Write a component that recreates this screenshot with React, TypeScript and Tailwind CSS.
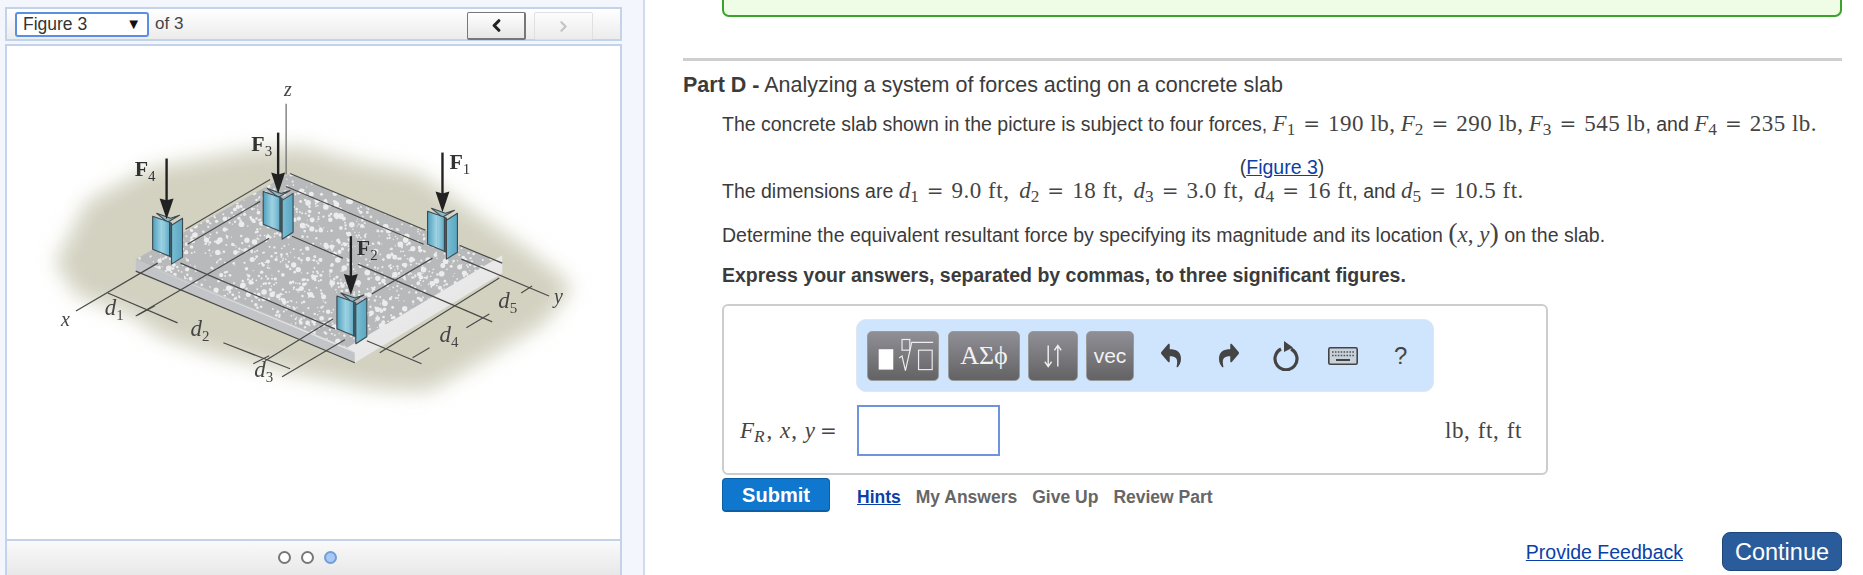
import { ChevronLeft, ChevronRight } from 'lucide-react';
import type { ReactNode } from 'react';
import { FaReply, FaShare } from 'react-icons/fa';

// speckle on the slab surface, seeded so every render gives the same dots
let seed = 17;
const rnd = () => {
  seed = (seed * 16807) % 2147483647;
  return seed / 2147483647;
};
const slabDots = Array.from({ length: 1100 }, () => {
  const u = rnd();
  const v = rnd();
  return {
    x: 290 + u * 213 + v * -155,
    y: 172 + u * 90 + v * 86,
    r: rnd() < 0.2 ? 1.5 + rnd() * 1.4 : 0.6 + rnd() * 0.8,
  };
});

function Column({ x, y }: { x: number; y: number }) {
  return (
    <g transform={`translate(${x} ${y})`} stroke="#3d4a50" strokeWidth="1.1" strokeLinejoin="round">
      <path d="M4 0 L18 5 L27 2 L15 9 Z" fill="#8fb4c2" />
      <path d="M0 3 L17 9 L17 43 L0 36 Z" fill="url(#steelA)" />
      <path d="M10 7 L10 39" stroke="#8ccade" strokeWidth="1" fill="none" />
      <path d="M17 9 L19 10 L19 44 L17 43 Z" fill="#40616e" />
      <path d="M19 12 L30 5 L30 44 L19 51 Z" fill="url(#steelB)" />
    </g>
  );
}

function Arrow({ x, y1, y2 }: { x: number; y1: number; y2: number }) {
  return (
    <g>
      <line x1={x} y1={y1} x2={x} y2={y2 - 10} stroke="#222" strokeWidth="2.4" />
      <path d={`M${x - 7} ${y2 - 21} L${x} ${y2 - 19} L${x + 7} ${y2 - 21} L${x} ${y2} Z`} fill="#222" />
    </g>
  );
}

function Force({ x, y, n }: { x: number; y: number; n: string }) {
  return (
    <text x={x} y={y} fontFamily="'Liberation Serif', serif" fontSize="22" fontWeight="700" fill="#333">
      F
      <tspan dy="5" fontSize="15" fontWeight="400">
        {n}
      </tspan>
    </text>
  );
}

function Dim({ x, y, n }: { x: number; y: number; n: string }) {
  return (
    <text x={x} y={y} fontFamily="'Liberation Serif', serif" fontSize="23" fontStyle="italic" fill="#444">
      d
      <tspan dy="5" fontSize="15" fontStyle="normal">
        {n}
      </tspan>
    </text>
  );
}

function SlabFigure() {
  const lines = [
    'M286 185 L424 243', 'M462 258 L550 295',
    'M270 178 L185 228', 'M260 200 L187 243', 'M157 262 L75 310',
    'M290 172 L426 229', 'M460 244 L503 262',
    'M269 237 L137 314', 'M292 235 L343 257', 'M358 263 L493 321',
    'M433 257 L372 293', 'M333 318 L265 360', 'M345 339 L282 376',
    'M180 262 L335 328', 'M367 340 L422 363',
    'M107 292 L177 322', 'M223 342 L290 368',
    'M135 315 L154 305', 'M253 363 L269 355', 'M413 357 L430 347',
    'M467 327 L490 313', 'M522 292 L533 285',
    'M380 352 L500 277', 'M135 270 L355 362',
  ];
  return (
    <svg viewBox="6 44 615 495" className="block w-full h-full">
      <defs>
        <filter id="soft" x="-20%" y="-20%" width="140%" height="140%">
          <feGaussianBlur stdDeviation="10" />
        </filter>
        <filter id="lens">
          <feGaussianBlur stdDeviation="0.5" />
        </filter>
        <linearGradient id="steelA" x1="0" x2="1" y1="0" y2="0">
          <stop offset="0" stopColor="#4f9fbd" />
          <stop offset="0.55" stopColor="#a2d5e5" />
          <stop offset="1" stopColor="#5fa9c4" />
        </linearGradient>
        <linearGradient id="steelB" x1="0" x2="1" y1="0" y2="0">
          <stop offset="0" stopColor="#79bed3" />
          <stop offset="1" stopColor="#5aa6c2" />
        </linearGradient>
        <clipPath id="slabTop">
          <path d="M290 172 L503 262 L355 350 L135 258 Z" />
        </clipPath>
      </defs>
      <path
        d="M54 262 L86 200 L148 167 L252 148 L303 145 L358 160 L420 172 L460 201 L523 244 L568 279 L572 290 L544 324 L482 361 L429 391 L379 389 L295 373 L210 353 L162 337 L129 314 L75 294 Z"
        fill="#d3d2c1"
        filter="url(#soft)"
      />
      <g filter="url(#lens)">
        <path d="M135 258 L355 350 L355 362 L135 270 Z" fill="#c3c4c7" />
        <path d="M355 350 L503 262 L503 272 L355 362 Z" fill="#e8e8e8" />
        <path d="M290 172 L503 262 L355 350 L135 258 Z" fill="#b8b9bb" />
        <g clipPath="url(#slabTop)">
          {slabDots.map((d, i) => (
            <circle key={i} cx={d.x} cy={d.y} r={d.r} fill="#ececec" />
          ))}
        </g>
        <path d="M355 352 L503 264 L503 254 L347 347 Z" fill="#e9e9e9" />
        <path d="M135 260 L355 352 L347 347 L130 258 Z" fill="#e4e4e4" />
        <line x1="286" y1="102" x2="286" y2="173" stroke="#666" strokeWidth="1.2" />
        {lines.map((d) => (
          <path key={d} d={d} stroke="#4a4a48" strokeWidth="1.2" fill="none" />
        ))}
        <Column x={263} y={187} />
        <Column x={152} y={212} />
        <Column x={428} y={207} />
        <Column x={337} y={292} />
        <Arrow x={278} y1={131} y2={192} />
        <Arrow x={166} y1={157} y2={218} />
        <Arrow x={443} y1={151} y2={211} />
        <Arrow x={351} y1={235} y2={294} />
        <Force x={134} y={175} n="4" />
        <Force x={251} y={149} n="3" />
        <Force x={450} y={168} n="1" />
        <Force x={357} y={254} n="2" />
        <g fontFamily="'Liberation Serif', serif" fontSize="20" fontStyle="italic" fill="#444">
          <text x={284} y={94}>z</text>
          <text x={60} y={325}>x</text>
          <text x={555} y={302}>y</text>
        </g>
        <Dim x={104} y={314} n="1" />
        <Dim x={190} y={335} n="2" />
        <Dim x={254} y={376} n="3" />
        <Dim x={440} y={341} n="4" />
        <Dim x={499} y={307} n="5" />
      </g>
    </svg>
  );
}

function FigurePane() {
  return (
    <aside className="w-[645px] h-[575px] shrink-0 bg-[#f3f7fd] border-r-2 border-[#cfdcf0] pt-[7px] pl-[5px]">
      <div className="w-[617px] h-[34px] flex items-start pl-[8px] pt-[3px] bg-gradient-to-b from-white to-[#ececec] border-2 border-[#c3d3e9]">
        <div className="w-[134px] h-[25px] flex items-center justify-between pl-[6px] pr-[6px] bg-white border-2 border-[#5a90e4] rounded-[3px] text-[17.5px] text-[#333]">
          <span>Figure 3</span>
          <span className="text-[15px] text-[#111]">▼</span>
        </div>
        <span className="ml-[6px] text-[17px] leading-[24px] text-[#444]">of 3</span>
        <button className="ml-[284px] w-[59px] h-[28px] flex items-center justify-center rounded-[2px] bg-gradient-to-b from-white to-[#e6e6e6] border border-b-2 border-r-2 border-[#777]">
          <ChevronLeft size={19} strokeWidth={4} color="#222" />
        </button>
        <button className="ml-[8px] w-[59px] h-[28px] flex items-center justify-center rounded-[2px] border border-[#e0e0e0]">
          <ChevronRight size={17} strokeWidth={3} color="#c4c4c4" />
        </button>
      </div>
      <div className="mt-[3px] w-[617px] h-[531px] flex flex-col bg-white border-x-2 border-t-2 border-[#c3d3e9]">
        <div className="h-[493px]">
          <SlabFigure />
        </div>
        <div className="flex-1 flex items-start justify-center gap-[10px] pt-[10px] pr-[12px] border-t-2 border-[#c3d3e9] bg-gradient-to-b from-[#fafafa] to-[#e8e8e8]">
          <span className="w-[13px] h-[13px] rounded-full bg-white border-2 border-[#777]" />
          <span className="w-[13px] h-[13px] rounded-full bg-white border-2 border-[#777]" />
          <span className="w-[13px] h-[13px] rounded-full bg-[#a9c8f5] border-2 border-[#6f9fd8]" />
        </div>
      </div>
    </aside>
  );
}

function M({ children }: { children: ReactNode }) {
  return <span className="font-['Liberation_Serif',serif] text-[23px] text-[#444] whitespace-nowrap">{children}</span>;
}

function V({ s, n }: { s: string; n: string }) {
  return (
    <>
      <i>{s}</i>
      <sub className="not-italic">{n}</sub>
    </>
  );
}

// the wide equals sign of the math font
function Equals() {
  return <span className="mx-[8px] font-['DejaVu_Serif',serif] text-[20px]">=</span>;
}

function Eq({ s, n, v }: { s: string; n: string; v: string }) {
  return (
    <M>
      <V s={s} n={n} />
      <Equals />
      <span className="tracking-[0.5px]">{v}</span>
    </M>
  );
}

function ToolButton({ className, children }: { className: string; children: ReactNode }) {
  return (
    <div className={`${className} h-[50px] flex items-center justify-center rounded-[5px] border border-[#9a9a9a] bg-gradient-to-b from-[#918f96] to-[#636365] text-[#f2f2f2]`}>
      {children}
    </div>
  );
}

function AnswerBox() {
  return (
    <div className="mt-[17px] w-[826px] h-[171px] border-2 border-[#cdcdcd] rounded-[6px] pt-[13px] pl-[132px]">
      <div className="w-[578px] h-[73px] flex items-center pl-[10px] bg-[#cfe4fd] border border-[#dfe7f0] rounded-[10px]">
        <ToolButton className="w-[72px]">
          <svg width="72" height="50" viewBox="0 0 72 50" fill="none" stroke="#eee" strokeWidth="1.2">
            <rect x="11" y="18" width="15" height="21" fill="#fff" stroke="none" />
            <rect x="35" y="8" width="8" height="11" />
            <path d="M32 27 L35 25 L38.5 40 L45 11 L67 11" />
            <rect x="52" y="19" width="14" height="20" />
          </svg>
        </ToolButton>
        <ToolButton className="ml-[9px] w-[72px] font-['Liberation_Serif',serif] text-[26px]">ΑΣϕ</ToolButton>
        <ToolButton className="ml-[8px] w-[50px]">
          <svg width="50" height="50" viewBox="0 0 50 50" fill="none" stroke="#eee" strokeWidth="1.5">
            <path d="M20 14 L20 36 M16.5 31 L20 36 L23.5 31" />
            <path d="M30 36 L30 14 M26.5 19 L30 14 L33.5 19" />
          </svg>
        </ToolButton>
        <ToolButton className="ml-[8px] w-[48px] text-[21px]">vec</ToolButton>
        <div className="w-[26px] ml-[24px] flex justify-center">
          <FaReply preserveAspectRatio="none" className="w-[20px] h-[27px]" color="#444" />
        </div>
        <div className="w-[26px] ml-[32px] flex justify-center">
          <FaShare preserveAspectRatio="none" className="w-[20px] h-[27px]" color="#444" />
        </div>
        <div className="w-[28px] ml-[30px] flex justify-center">
          <svg width="28" height="30" viewBox="0 0 28 30" fill="none">
            <path d="M9 8 A11 11 0 1 0 19 8" stroke="#444" strokeWidth="3.2" />
            <path d="M12 0 L21 6.5 L12 11 Z" fill="#444" />
          </svg>
        </div>
        <div className="w-[30px] ml-[28px] flex justify-center">
          <svg width="30" height="18" viewBox="0 0 30 18">
            <rect x="0.8" y="0.8" width="28.4" height="16.4" rx="1.5" fill="#c7d2dc" stroke="#444" strokeWidth="1.6" />
            <path d="M4 5 H26 M4 8.5 H26" stroke="#555" strokeWidth="1.6" strokeDasharray="1.6 1.3" />
            <path d="M8 13 H22" stroke="#444" strokeWidth="2" />
          </svg>
        </div>
        <span className="ml-[36px] text-[24px] text-[#444]">?</span>
      </div>
      <div className="mt-[13px] flex items-center h-[51px] -ml-[116px] pr-[24px]">
        <div className="w-[117px] shrink-0 whitespace-nowrap">
          <M>
            <i>F</i>
            <sub className="italic">R</sub>
            <span className="ml-[2px]">,</span> <i className="ml-[2px]">x</i>
            <span className="ml-[1px]">,</span> <i className="ml-[2px]">y</i>
            <span className="-ml-[3px] inline-block">
              <Equals />
            </span>
          </M>
        </div>
        <div className="w-[143px] h-[51px] bg-white border-2 border-[#6d94dc]" />
        <div className="ml-auto">
          <M>
            <span className="tracking-[0.6px] [word-spacing:1px]">lb, ft, ft</span>
          </M>
        </div>
      </div>
    </div>
  );
}

function QuestionPane() {
  return (
    <main className="flex-1 pl-[38px] pr-[21px] text-[19.5px] leading-[24px] text-[#3b3b3b]">
      <div className="ml-[39px] h-[17px] bg-[#effde6] border-2 border-t-0 border-[#39a32a] rounded-b-[7px]" />
      <div className="mt-[41px] h-[3px] bg-[#cfcfcf]" />
      <h2 className="mt-[12px] h-[24px] text-[21.5px]">
        <b>Part D -</b> Analyzing a system of forces acting on a concrete slab
      </h2>
      <div className="pl-[39px]">
        <p className="mt-[15px] h-[24px] whitespace-nowrap">
          The concrete slab shown in the picture is subject to four forces, <Eq s="F" n="1" v="190 lb" />
          <M>, </M>
          <Eq s="F" n="2" v="290 lb" />
          <M>, </M>
          <Eq s="F" n="3" v="545 lb" />, and <Eq s="F" n="4" v="235 lb" />
          <M>.</M>
        </p>
        <p className="mt-[19px] h-[24px] text-center">
          (<a className="text-[#0b3fa8] underline">Figure 3</a>)
        </p>
        <p className="h-[24px] whitespace-nowrap">
          The dimensions are <Eq s="d" n="1" v="9.0 ft" />
          <M>,&nbsp;&thinsp;</M>
          <Eq s="d" n="2" v="18 ft" />
          <M>,&nbsp;&thinsp;</M>
          <Eq s="d" n="3" v="3.0 ft" />
          <M>,&nbsp;&thinsp;</M>
          <Eq s="d" n="4" v="16 ft" />, and <Eq s="d" n="5" v="10.5 ft" />
          <M>.</M>
        </p>
        <p className="mt-[18px] h-[26px] whitespace-nowrap">
          Determine the equivalent resultant force by specifying its magnitude and its location{' '}
          <M>
            <span className="text-[28px] font-light">(</span>
            <i>x</i>, <i>y</i>
            <span className="text-[28px] font-light">)</span>
          </M>{' '}
          on the slab.
        </p>
        <p className="mt-[16px] h-[24px] font-bold whitespace-nowrap">Express your answers, separated by commas, to three significant figures.</p>
        <AnswerBox />
        <div className="mt-[3px] flex items-start h-[34px] text-[17.5px] font-bold text-[#666]">
          <button className="w-[108px] h-[34px] rounded-[4px] bg-[#0f78ce] border border-[#0c5fa5] border-b-2 text-[20px] text-white">Submit</button>
          <div className="flex pt-[7px]">
            <a className="ml-[27px] text-[#0b3fa8] underline">Hints</a>
            <span className="ml-[15px]">My Answers</span>
            <span className="ml-[15px]">Give Up</span>
            <span className="ml-[15px]">Review Part</span>
          </div>
        </div>
        <div className="mt-[20px] flex items-center justify-end h-[39px] text-[19.5px]">
          <a className="text-[#0b3fa8] underline">Provide Feedback</a>
          <button className="ml-[39px] w-[120px] h-[39px] rounded-[8px] bg-[#2a5c9b] border border-[#1d4577] text-[23.5px] text-white">Continue</button>
        </div>
      </div>
    </main>
  );
}

export default function App() {
  return (
    <div className="flex w-[1863px] h-[575px] overflow-hidden bg-white font-['Liberation_Sans',Arial,sans-serif]">
      <FigurePane />
      <QuestionPane />
    </div>
  );
}
